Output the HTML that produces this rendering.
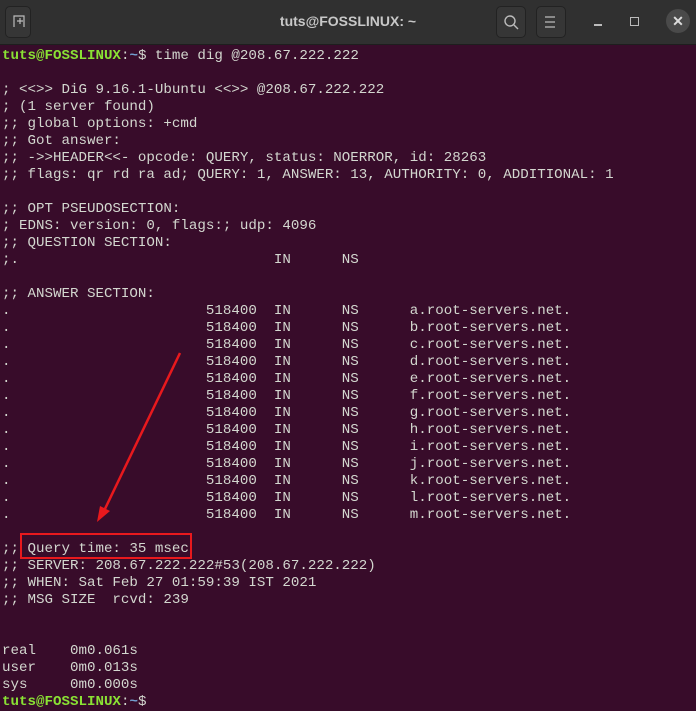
<!DOCTYPE html>
<html><head><style>
body{margin:0;width:696px;height:710px;overflow:hidden;background:#380c2a;font-family:"Liberation Mono",monospace}
.tb{position:absolute;left:0;top:0;width:696px;height:44px;background:#303030;border-bottom:1px solid #1e1e1e}
.title{position:absolute;left:0;width:696px;top:13px;text-align:center;color:#c8c8c8;font:bold 14px "Liberation Sans",sans-serif}
.btn{position:absolute;top:6px;width:24px;height:30px;border:1px solid #222;border-radius:5px;background:#363636}
pre{position:absolute;left:2px;top:48px;margin:0;font-size:14.17px;line-height:17px;color:#d3d7cf;tab-size:8}
.g{color:#8ae234;font-weight:bold}.b{color:#729fcf;font-weight:bold}
</style></head><body>
<div class="tb">
<div class="btn" style="left:5px"></div>
<svg style="position:absolute;left:12px;top:14px" width="14" height="14" fill="none" stroke="#bbb" stroke-width="1.2"><path d="M2 13V2h10v11M5 7h6M8 4v6"/></svg>
<div class="title">tuts@FOSSLINUX: ~</div>
<div class="btn" style="left:496px;width:28px"></div>
<svg style="position:absolute;left:503px;top:14px" width="16" height="16" fill="none" stroke="#bbb" stroke-width="1.4"><circle cx="7" cy="7" r="5"/><path d="M11 11l4 4"/></svg>
<div class="btn" style="left:536px;width:28px"></div>
<svg style="position:absolute;left:543px;top:15px" width="14" height="14" stroke="#bbb" stroke-width="1.3"><path d="M2 2h10M2 7h10M2 12h10"/></svg>
<div style="position:absolute;left:594px;top:24px;width:8px;height:1.5px;background:#bbb"></div>
<div style="position:absolute;left:630px;top:17px;width:7px;height:7px;border:1.3px solid #bbb"></div>
<div style="position:absolute;left:666px;top:9px;width:24px;height:24px;border-radius:50%;background:#4a4a4a;color:#ddd;font:bold 14px 'Liberation Sans',sans-serif;text-align:center;line-height:24px">✕</div>
</div>
<pre><span class="g">tuts@FOSSLINUX</span>:<span class="b">~</span>$ time dig @208.67.222.222

; &lt;&lt;&gt;&gt; DiG 9.16.1-Ubuntu &lt;&lt;&gt;&gt; @208.67.222.222
; (1 server found)
;; global options: +cmd
;; Got answer:
;; -&gt;&gt;HEADER&lt;&lt;- opcode: QUERY, status: NOERROR, id: 28263
;; flags: qr rd ra ad; QUERY: 1, ANSWER: 13, AUTHORITY: 0, ADDITIONAL: 1

;; OPT PSEUDOSECTION:
; EDNS: version: 0, flags:; udp: 4096
;; QUESTION SECTION:
;.                              IN      NS

;; ANSWER SECTION:
.                       518400  IN      NS      a.root-servers.net.
.                       518400  IN      NS      b.root-servers.net.
.                       518400  IN      NS      c.root-servers.net.
.                       518400  IN      NS      d.root-servers.net.
.                       518400  IN      NS      e.root-servers.net.
.                       518400  IN      NS      f.root-servers.net.
.                       518400  IN      NS      g.root-servers.net.
.                       518400  IN      NS      h.root-servers.net.
.                       518400  IN      NS      i.root-servers.net.
.                       518400  IN      NS      j.root-servers.net.
.                       518400  IN      NS      k.root-servers.net.
.                       518400  IN      NS      l.root-servers.net.
.                       518400  IN      NS      m.root-servers.net.

;; Query time: 35 msec
;; SERVER: 208.67.222.222#53(208.67.222.222)
;; WHEN: Sat Feb 27 01:59:39 IST 2021
;; MSG SIZE  rcvd: 239


real    0m0.061s
user    0m0.013s
sys     0m0.000s
<span class="g">tuts@FOSSLINUX</span>:<span class="b">~</span>$</pre>
<div style="position:absolute;left:20px;top:533px;width:168px;height:22px;border:2.5px solid #e8191d"></div>
<svg style="position:absolute;left:0;top:0" width="696" height="710"><path d="M180 353L103 513" stroke="#e8191d" stroke-width="2.5"/><path d="M97 522L100 506L110 511Z" fill="#e8191d"/></svg>
</body></html>
